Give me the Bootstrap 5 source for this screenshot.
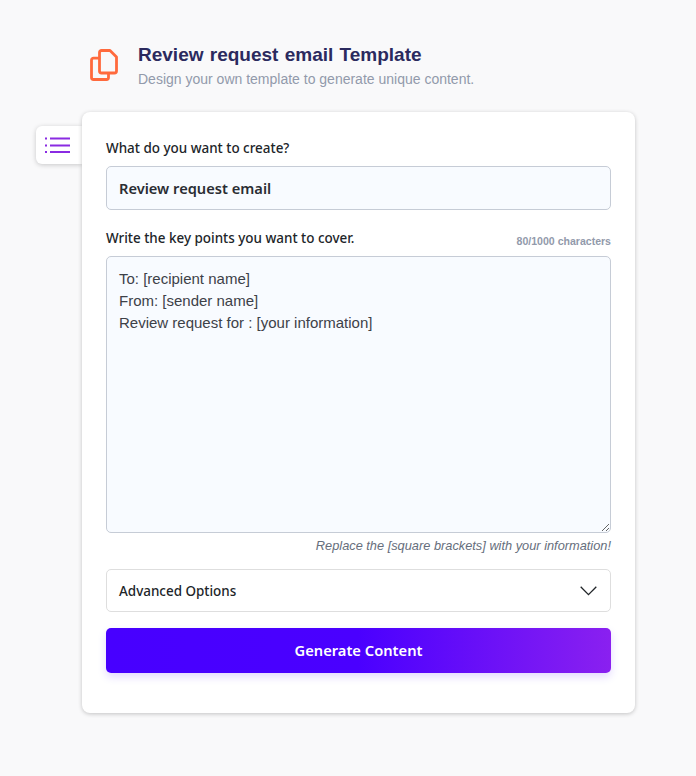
<!DOCTYPE html>
<html lang="en">
<head>
<meta charset="utf-8">
<title>Review request email Template</title>
<link href="https://cdn.jsdelivr.net/npm/bootstrap@5.3.0/dist/css/bootstrap.min.css" rel="stylesheet">
<style>
html, body { height: 100%; }
body { background: #f9f9fa; font-family: "Liberation Sans", Arial, sans-serif; overflow: hidden; }
.page-wrap { width: 553px; margin-left: 82px; padding-top: 43px; position: relative; }
.head-row { height: 69px; margin-left: 8px; gap: 20px; }
.head-icon { width: 28px; height: 34px; flex: none; margin-top: 5px; }
.head-title { font-size: 19px; line-height: 24px; font-weight: 700; color: #2b2a5e; margin: 0 0 2px; word-spacing: 1px; }
.head-sub { font-size: 14px; line-height: 20px; color: #929aab; margin: 0; }
.tool-tab { position: absolute; left: -46px; top: 126px; width: 46px; height: 38px; background: #fff; border-radius: 6px 0 0 6px; box-shadow: 0 1px 5px rgba(0,0,0,.2); display: flex; align-items: center; justify-content: center; padding-right: 4px; }
.form-panel { height: 601px; padding: 24px; background: #fff; border: 0; border-radius: 8px; box-shadow: 0 1px 4px rgba(0,0,0,.22); position: relative; }
.lbl { font-family: "Noto Sans", sans-serif; font-size: 13.45px; line-height: 18px; font-weight: 500; color: #212529; margin: 0; }
.first-lbl { margin-bottom: 9px; margin-top: 3px; }
.topic-input.form-control { height: 44px; background: #f8fbff; border: 1px solid #c6ccd6; border-radius: 5px; padding: 0 12px; font-family: "Noto Sans", sans-serif; font-size: 14.65px; font-weight: 600; color: #2a2d33; }
.second-row { margin-top: 19px; height: 27px; padding-bottom: 9px; }
.counter { font-size: 10.55px; font-weight: 700; color: #929aab; line-height: 12px; padding-top: 6px; }
.points.form-control { display: block; height: 277px; background: #f8fbff; border: 1px solid #c6ccd6; border-radius: 5px; padding: 11px 12px 9px; font-size: 15px; line-height: 22px; color: #3d4148; resize: vertical; }
.hint { font-size: 12.8px; line-height: 16px; font-style: italic; color: #666e7c; text-align: right; margin-top: 5px; margin-bottom: -1px; }
.adv-box { margin-top: 16px; height: 43px; border: 1px solid #dedede; border-radius: 5px; padding: 0 13px 0 12px; background: #fff; }
.go-btn.btn { margin-top: 16px; width: 100%; height: 45px; border: 0; border-radius: 5px; color: #fff; font-family: "Noto Sans", sans-serif; font-size: 14.7px; font-weight: 600; background: linear-gradient(90deg, #4700ff 0%, #4a00ff 50%, #8a20f0 100%); box-shadow: 0 4px 8px rgba(70,0,255,.15); }
</style>
</head>
<body>
<div class="page-wrap">
  <div class="d-flex align-items-start head-row">
    <svg class="head-icon" viewBox="0 0 28 34" fill="none" stroke="#ff6a3d" stroke-width="2.800" stroke-linejoin="round" stroke-linecap="round" aria-hidden="true">
      <path d="M11.500 2.500h8.500l6.500 6.500v14a2 2 0 0 1-2 2H11.500a2 2 0 0 1-2-2V4.500a2 2 0 0 1 2-2z"/>
      <path d="M9 10.200H3.500a2 2 0 0 0-2 2v17.300a2 2 0 0 0 2 2h13a2 2 0 0 0 2-2v-4"/>
    </svg>
    <div>
      <h1 class="head-title">Review request email Template</h1>
      <p class="head-sub">Design your own template to generate unique content.</p>
    </div>
  </div>
  <div class="tool-tab">
    <svg width="25" height="17" viewBox="0 0 25 17" aria-hidden="true">
      <g fill="#8a2be2">
        <rect x="5" y="0.500" width="20" height="2"/>
        <rect x="5" y="7.500" width="20" height="2"/>
        <rect x="5" y="14" width="20" height="2"/>
        <rect x="0" y="0.500" width="2" height="2"/>
        <rect x="0" y="7.500" width="2" height="2"/>
        <rect x="0" y="14" width="2" height="2"/>
      </g>
    </svg>
  </div>
  <div class="card form-panel">
    <label class="lbl first-lbl" for="topic">What do you want to create?</label>
    <input id="topic" class="form-control topic-input" type="text" value="Review request email">
    <div class="d-flex justify-content-between align-items-center second-row">
      <label class="lbl" for="points">Write the key points you want to cover.</label>
      <span class="counter">80/1000 characters</span>
    </div>
    <textarea id="points" class="form-control points">To: [recipient name]
From: [sender name]
Review request for : [your information]</textarea>
    <div class="hint">Replace the [square brackets] with your information!</div>
    <div class="d-flex justify-content-between align-items-center adv-box">
      <span class="lbl">Advanced Options</span>
      <svg width="17" height="10" viewBox="0 0 17 10" fill="none" stroke="#212529" stroke-width="1.300" aria-hidden="true"><path d="M.7.8l7.800 7.800L16.300.8"/></svg>
    </div>
    <button type="button" class="btn go-btn">Generate Content</button>
  </div>
</div>
<script src="https://cdn.jsdelivr.net/npm/bootstrap@5.3.0/dist/js/bootstrap.bundle.min.js"></script>
</body>
</html>
